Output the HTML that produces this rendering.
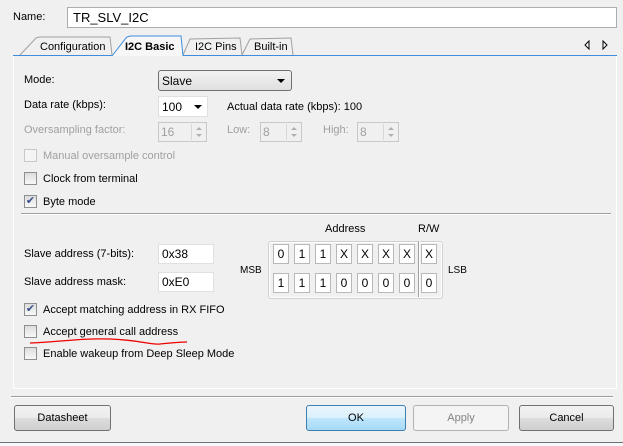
<!DOCTYPE html><html><head><style>
*{box-sizing:border-box;margin:0;padding:0}
body{width:623px;height:446px;background:#f0f0f0;font-family:"Liberation Sans",sans-serif;font-size:11px;color:#000;position:relative;overflow:hidden}
.a{position:absolute;white-space:nowrap}
.t{line-height:14px}
.in{background:#fff;border:1px solid #abadb3}
.dis{color:#a0a0a0}
.cb{width:13px;height:13px;border:1px solid #8e8f8f;background:linear-gradient(#ddd,#f8f8f8)}
.cbd{border-color:#c8c8c8;background:#f4f4f4}
.cell{width:16px;height:20px;background:#fff;border:1px solid #b8b8b8;text-align:center;line-height:18px;font-size:12px}
.btn{height:26px;border:1px solid #707070;border-radius:3px;background:linear-gradient(#f2f2f2 0,#ebebeb 50%,#dddddd 51%,#cfcfcf 100%);text-align:center;line-height:24px}
.spin{border:1px solid #c8c8c8;background:#f0f0f0;font-size:12px}
.sb{position:absolute;right:1px;top:1px;width:14px;height:16px;border-left:1px solid #d8d8d8}
.sb:before{content:"";position:absolute;left:4px;top:3px;border:3px solid transparent;border-bottom:3px solid #b0b0b0;border-top:0}
.sb:after{content:"";position:absolute;left:4px;top:10px;border:3px solid transparent;border-top:3px solid #b0b0b0;border-bottom:0}
</style></head><body>
<div class="a t" style="left:13px;top:10px">Name:</div>
<div class="a in" style="left:67px;top:7px;width:550px;height:21px;padding:2px 5px;font-size:13px">TR_SLV_I2C</div>

<svg class="a" style="left:0;top:34px" width="623" height="24">
<path d="M20 21 L36 4 Q38 3 41 3 L110 3 L112 21" fill="#f0f0f0" stroke="#a0a0a0"/>
<path d="M183 21 L190 5 L240 4 L242 21" fill="#f0f0f0" stroke="#a0a0a0"/>
<path d="M242 21 L250 5 L291 4 L293 21" fill="#f0f0f0" stroke="#a0a0a0"/>
<path d="M112 22 L126 4 Q128 2 131 2 L181 2 L183 22" fill="#f7f7f7" stroke="#3c8de0"/>
<line x1="13" y1="21.5" x2="112" y2="21.5" stroke="#3c8de0"/>
<line x1="183" y1="21.5" x2="617" y2="21.5" stroke="#3c8de0"/>
<path d="M589 7 L589 15 L585 11 Z" fill="#fff" stroke="#000"/>
<path d="M603 7 L603 15 L607 11 Z" fill="#fff" stroke="#000"/>
</svg>
<div class="a t" style="left:40px;top:40px">Configuration</div>
<div class="a t" style="left:125px;top:40px;font-weight:bold">I2C Basic</div>
<div class="a t" style="left:195px;top:40px">I2C Pins</div>
<div class="a t" style="left:254px;top:40px">Built-in</div>
<div class="a" style="left:13px;top:56px;width:604px;height:333px;border-left:1px solid #fff;border-right:1px solid #fff;border-bottom:1px solid #fff"></div>

<div class="a t" style="left:24px;top:73px">Mode:</div>
<div class="a" style="left:158px;top:70px;width:134px;height:21px;border:1px solid #707070;border-radius:3px;background:linear-gradient(#f2f2f2,#e0e0e0);padding:3px 3px;font-size:12px">Slave<span style="position:absolute;right:6px;top:8px;border:4px solid transparent;border-top:4px solid #000;border-bottom:0"></span></div>

<div class="a t" style="left:24px;top:98px">Data rate (kbps):</div>
<div class="a in" style="left:158px;top:96px;width:50px;height:21px;border-color:#e0e0e0;padding:3px 3px;font-size:12px">100<span style="position:absolute;right:5px;top:8px;border:4px solid transparent;border-top:4px solid #000;border-bottom:0"></span></div>
<div class="a t" style="left:227px;top:100px">Actual data rate (kbps): 100</div>

<div class="a t dis" style="left:24px;top:123px">Oversampling factor:</div>
<div class="a spin" style="left:158px;top:122px;width:49px;height:20px;padding:2px 2px;color:#a0a0a0">16<span class="sb"></span></div>
<div class="a t dis" style="left:227px;top:123px">Low:</div>
<div class="a spin" style="left:260px;top:122px;width:42px;height:20px;padding:2px 2px;color:#a0a0a0">8<span class="sb"></span></div>
<div class="a t dis" style="left:323px;top:123px">High:</div>
<div class="a spin" style="left:357px;top:122px;width:42px;height:20px;padding:2px 2px;color:#a0a0a0">8<span class="sb"></span></div>

<div class="a cb cbd" style="left:24px;top:149px"></div><div class="a t dis" style="left:43px;top:149px">Manual oversample control</div>
<div class="a cb" style="left:24px;top:172px"></div><div class="a t" style="left:43px;top:172px">Clock from terminal</div>
<div class="a cb" style="left:24px;top:195px;color:#3b4f8a;font-size:11px;line-height:11px;text-align:center">✔</div><div class="a t" style="left:43px;top:195px">Byte mode</div>
<div class="a" style="left:21px;top:213px;width:590px;height:2px;border-top:1px solid #a0a0a0;border-bottom:1px solid #fff"></div>

<div class="a t" style="left:325px;top:222px">Address</div>
<div class="a t" style="left:418px;top:222px">R/W</div>
<div class="a t" style="left:24px;top:247px">Slave address (7-bits):</div>
<div class="a in" style="left:158px;top:244px;width:56px;height:20px;border-color:#e0e0e0;padding:2px 3px;font-size:12px">0x38</div>
<div class="a t" style="left:24px;top:275px">Slave address mask:</div>
<div class="a in" style="left:158px;top:272px;width:56px;height:20px;border-color:#e0e0e0;padding:2px 3px;font-size:12px">0xE0</div>
<div class="a t" style="left:240px;top:264px;font-size:10px">MSB</div>
<div class="a t" style="left:448px;top:264px;font-size:10px">LSB</div>
<div class="a" style="left:268px;top:241px;width:175px;height:58px;border:1px solid #d0d0d0;border-radius:3px;box-shadow:inset 0 0 0 1px #fff"></div>
<div class="a" style="left:418px;top:241px;width:2px;height:56px;background:#a0a0a0;border-right:1px solid #fff"></div>
<div class="a cell" style="left:273px;top:244px">0</div><div class="a cell" style="left:294px;top:244px">1</div><div class="a cell" style="left:315px;top:244px">1</div><div class="a cell" style="left:336px;top:244px">X</div><div class="a cell" style="left:357px;top:244px">X</div><div class="a cell" style="left:378px;top:244px">X</div><div class="a cell" style="left:399px;top:244px">X</div><div class="a cell" style="left:421px;top:244px">X</div>
<div class="a cell" style="left:273px;top:273px">1</div><div class="a cell" style="left:294px;top:273px">1</div><div class="a cell" style="left:315px;top:273px">1</div><div class="a cell" style="left:336px;top:273px">0</div><div class="a cell" style="left:357px;top:273px">0</div><div class="a cell" style="left:378px;top:273px">0</div><div class="a cell" style="left:399px;top:273px">0</div><div class="a cell" style="left:421px;top:273px">0</div>

<div class="a cb" style="left:24px;top:303px;color:#3b4f8a;font-size:11px;line-height:11px;text-align:center">✔</div><div class="a t" style="left:43px;top:303px">Accept matching address in RX FIFO</div>
<div class="a cb" style="left:24px;top:325px"></div><div class="a t" style="left:43px;top:325px">Accept general call address</div>
<div class="a cb" style="left:24px;top:347px"></div><div class="a t" style="left:43px;top:347px">Enable wakeup from Deep Sleep Mode</div>
<svg class="a" style="left:0;top:330px" width="200" height="30"><path d="M30 13 C60 12 80 8 110 9 C140 10 150 15 160 14 C170 13 180 12 187 12" fill="none" stroke="#e00" stroke-width="1.3"/></svg>

<div class="a" style="left:11px;top:396px;width:602px;height:2px;border-top:1px solid #a0a0a0;border-bottom:1px solid #fff"></div>
<div class="a btn" style="left:14px;top:405px;width:97px">Datasheet</div>
<div class="a btn" style="left:306px;top:405px;width:100px;border-color:#3c7fb1;background:linear-gradient(#eaf6fd 0,#d9f0fc 50%,#bee6fd 51%,#a7d9f5 100%)">OK</div>
<div class="a btn" style="left:413px;top:405px;width:96px;border-color:#adb2b5;background:#f4f4f4;color:#838383">Apply</div>
<div class="a btn" style="left:519px;top:405px;width:95px">Cancel</div>
<div class="a" style="left:0;top:442px;width:623px;height:1px;background:#707070"></div>
<div class="a" style="left:0;top:443px;width:623px;height:3px;background:#f4f8fa"></div>
</body></html>
